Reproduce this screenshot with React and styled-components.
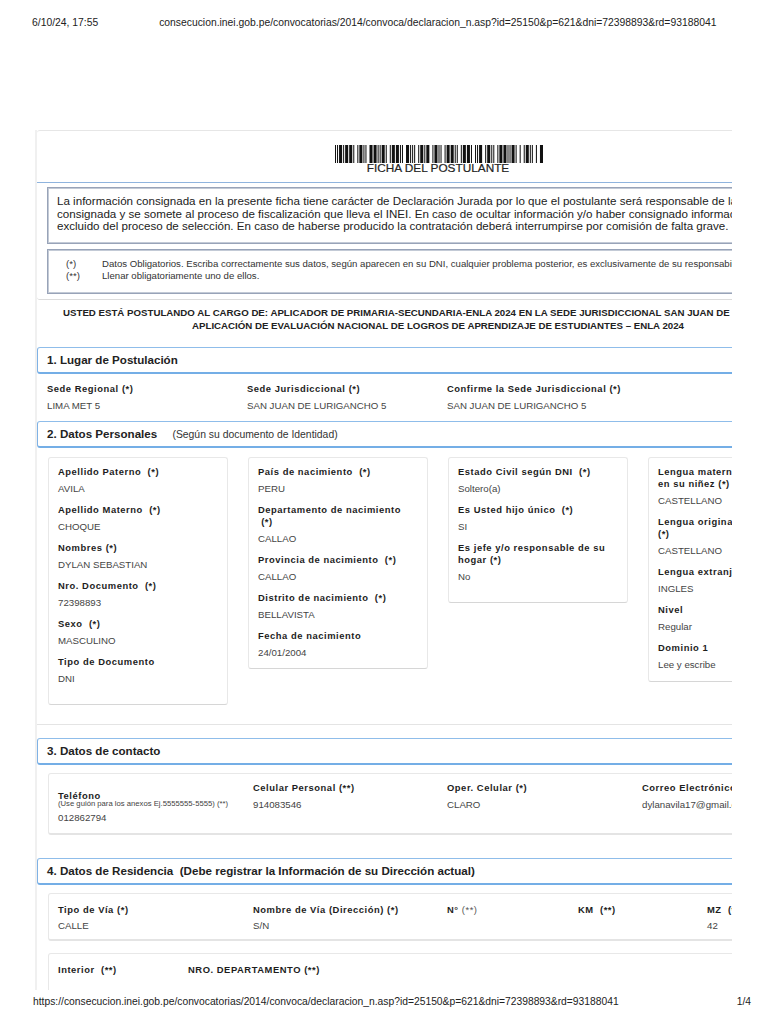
import React from "react";
import styled, { createGlobalStyle } from "styled-components";

const GlobalStyle = createGlobalStyle`
  html, body {
    margin: 0;
    padding: 0;
    background: #fff;
    font-family: "Liberation Sans", Arial, sans-serif;
    color: #222;
  }
`;

// narrow/wide runs, bar then gap, read off the printed code
const BARS = [
  1, 1, 1, 1, 3, 1, 1, 1, 3, 1, 3, 1, 1, 3, 1, 1, 3, 1, 1, 1, 1, 3, 3, 1, 3, 1, 1, 1, 1, 1,
  3, 1, 1, 3, 1, 1, 3, 1, 3, 1, 1, 1, 1, 3, 3, 1, 1, 1, 1, 1, 1, 3, 1, 1, 3, 1, 1, 1, 3, 3,
  1, 1, 3, 1, 1, 1, 1, 3, 1, 1, 3, 1, 3, 1, 1, 1, 1, 3, 1, 1, 3, 1, 3, 1, 1, 3, 1, 1, 1, 1,
  3, 3, 1, 1, 3, 1, 1, 1, 1, 3, 1, 1, 3, 1, 3, 1, 1, 1, 1, 1, 3, 1, 1, 3, 1, 3, 1, 1, 3, 1,
  1, 1, 1, 3, 1, 3, 3,
];

function Barcode() {
  let x = 0;
  const rects = [];
  BARS.forEach((w, i) => {
    if (i % 2 === 0) rects.push(<rect key={i} x={x} y="0" width={w} height="18" fill="#111" />);
    x += w;
  });
  return (
    <BarcodeSvg viewBox={`0 0 ${x} 18`} preserveAspectRatio="none">
      {rects}
    </BarcodeSvg>
  );
}

function Field({ label, value, note }) {
  return (
    <FieldBox>
      <Label>{label}</Label>
      {note && <Note>{note}</Note>}
      <Value>{value}</Value>
    </FieldBox>
  );
}

export default function App() {
  return (
    <Page>
      <GlobalStyle />
      <PrintHeader>
        <span>6/10/24, 17:55</span>
        <HeaderUrl>consecucion.inei.gob.pe/convocatorias/2014/convoca/declaracion_n.asp?id=25150&p=621&dni=72398893&rd=93188041</HeaderUrl>
      </PrintHeader>

      <Sheet>
        <TopPanel>
          <TitleBlock>
            <Barcode />
            <Title>FICHA DEL POSTULANTE</Title>
          </TitleBlock>
          <NoticeArea>
            <Notice>
              <NoticeLine>La información consignada en la presente ficha tiene carácter de Declaración Jurada por lo que el postulante será responsable de la información</NoticeLine>
              <NoticeLine>consignada y se somete al proceso de fiscalización que lleva el INEI. En caso de ocultar información y/o haber consignado información falsa será</NoticeLine>
              <NoticeLine>excluido del proceso de selección. En caso de haberse producido la contratación deberá interrumpirse por comisión de falta grave.</NoticeLine>
            </Notice>
            <Legend>
              <LegendRow>
                <LegendMark>(*)</LegendMark>
                <span>Datos Obligatorios. Escriba correctamente sus datos, según aparecen en su DNI, cualquier problema posterior, es exclusivamente de su responsabilidad.</span>
              </LegendRow>
              <LegendRow>
                <LegendMark>(**)</LegendMark>
                <span>Llenar obligatoriamente uno de ellos.</span>
              </LegendRow>
            </Legend>
          </NoticeArea>
        </TopPanel>

        <Applying>
          <ApplyLine $indent={26}>USTED ESTÁ POSTULANDO AL CARGO DE: APLICADOR DE PRIMARIA-SECUNDARIA-ENLA 2024 EN LA SEDE JURISDICCIONAL SAN JUAN DE LURIGANCHO 5</ApplyLine>
          <ApplyLine $indent={155}>APLICACIÓN DE EVALUACIÓN NACIONAL DE LOGROS DE APRENDIZAJE DE ESTUDIANTES – ENLA 2024</ApplyLine>
        </Applying>

        <Body>
          <SectionHead>1. Lugar de Postulación</SectionHead>
          <PlaceRow>
            <Field label="Sede Regional (*)" value="LIMA MET 5" />
            <Field label="Sede Jurisdiccional (*)" value="SAN JUAN DE LURIGANCHO 5" />
            <Field label="Confirme la Sede Jurisdiccional (*)" value="SAN JUAN DE LURIGANCHO 5" />
          </PlaceRow>

          <SectionHead>
            2. Datos Personales <SectionNote>(Según su documento de Identidad)</SectionNote>
          </SectionHead>
          <CardColumns>
            <Card $extra={10}>
              <Field label="Apellido Paterno  (*)" value="AVILA" />
              <Field label="Apellido Materno  (*)" value="CHOQUE" />
              <Field label="Nombres (*)" value="DYLAN SEBASTIAN" />
              <Field label="Nro. Documento  (*)" value="72398893" />
              <Field label="Sexo  (*)" value="MASCULINO" />
              <Field label="Tipo de Documento" value="DNI" />
            </Card>
            <Card>
              <Field label="País de nacimiento  (*)" value="PERU" />
              <Field label={"Departamento de nacimiento\n (*)"} value="CALLAO" />
              <Field label="Provincia de nacimiento  (*)" value="CALLAO" />
              <Field label="Distrito de nacimiento  (*)" value="BELLAVISTA" />
              <Field label="Fecha de nacimiento" value="24/01/2004" />
            </Card>
            <Card $extra={10}>
              <Field label="Estado Civil según DNI  (*)" value="Soltero(a)" />
              <Field label="Es Usted hijo único  (*)" value="SI" />
              <Field label={"Es jefe y/o responsable de su\nhogar (*)"} value="No" />
            </Card>
            <Card $extra={1}>
              <Field label={"Lengua materna aprendida\nen su niñez (*)"} value="CASTELLANO" />
              <Field label={"Lengua originaria que habla\n(*)"} value="CASTELLANO" />
              <Field label="Lengua extranjera" value="INGLES" />
              <Field label="Nivel" value="Regular" />
              <Field label="Dominio 1" value="Lee y escribe" />
            </Card>
          </CardColumns>
          <Divider />

          <SectionHead>3. Datos de contacto</SectionHead>
          <WideCard $columns="195px 194px 195px 1fr">
            <PhoneCell>
              <Field label="Teléfono" note="(Use guión para los anexos Ej.5555555-5555) (**)" value="012862794" />
            </PhoneCell>
            <Field label="Celular Personal (**)" value="914083546" />
            <Field label="Oper. Celular (*)" value="CLARO" />
            <Field label="Correo Electrónico (*)" value="dylanavila17@gmail.com" />
          </WideCard>

          <SectionHead $top={23}>4. Datos de Residencia  (Debe registrar la Información de su Dirección actual)</SectionHead>
          <ResidenceCard $columns="195px 194px 131px 129px 1fr">
            <Field label="Tipo de Vía (*)" value="CALLE" />
            <Field label="Nombre de Vía (Dirección) (*)" value="S/N" />
            <Field label={<>N° <Light>(**)</Light></>} value="" />
            <Field label="KM  (**)" value="" />
            <Field label="MZ  (**)" value="42" />
          </ResidenceCard>
          <ResidenceCard $columns="130px 1fr" $top={12}>
            <Field label="Interior  (**)" value="" />
            <Field label="NRO. DEPARTAMENTO (**)" value="" />
          </ResidenceCard>
        </Body>
      </Sheet>

      <PrintFooter>
        <span>https://consecucion.inei.gob.pe/convocatorias/2014/convoca/declaracion_n.asp?id=25150&p=621&dni=72398893&rd=93188041</span>
        <span>1/4</span>
      </PrintFooter>
    </Page>
  );
}

const Page = styled.div`
  width: 768px;
  height: 1024px;
  overflow: hidden;
  display: flex;
  flex-direction: column;
`;

const PrintHeader = styled.header`
  height: 130px;
  box-sizing: border-box;
  padding: 16px 0 0 32px;
  display: flex;
  font-size: 10.35px;
  line-height: 13px;
  color: #222;
`;

const HeaderUrl = styled.span`
  margin-left: 61px;
  white-space: nowrap;
`;

const Sheet = styled.main`
  width: 697px;
  height: 860px;
  margin-left: 35px;
  overflow: hidden;
  border-left: 2px solid #f0f0f0;
  box-sizing: border-box;
`;

const TopPanel = styled.section`
  width: 900px;
  height: 170px;
  box-sizing: border-box;
  border-top: 1px solid #e6e6e6;
  border-bottom: 1px solid #dcdcdc;
  border-radius: 3px 0 0 3px;
`;

const TitleBlock = styled.div`
  height: 52px;
  box-sizing: border-box;
  padding: 14px 0 0 298px;
  border-bottom: 1px solid #8fb4de;
  position: relative;
`;

const BarcodeSvg = styled.svg`
  display: block;
  width: 208px;
  height: 18px;
`;

const Title = styled.div`
  width: 206px;
  text-align: center;
  font-size: 11.8px;
  line-height: 12px;
  margin-top: -1px;
  color: #222;
  -webkit-text-stroke: 0.2px #222;
`;

const NoticeArea = styled.div`
  padding: 4px 0 0 10px;
  display: flex;
  flex-direction: column;
  gap: 5px;
`;

const Notice = styled.div`
  height: 57px;
  box-sizing: border-box;
  padding: 7px 0 0 9px;
  border: 1px solid #98a3b8;
  box-shadow: inset 0 0 0 1px #c3cad6;
  white-space: nowrap;
`;

const NoticeLine = styled.div`
  font-size: 11.6px;
  line-height: 12.5px;
  color: #222;
`;

const Legend = styled.div`
  height: 45px;
  box-sizing: border-box;
  padding: 8px 0 0 18px;
  border: 1px solid #98a3b8;
  box-shadow: inset 0 0 0 1px #c3cad6;
  white-space: nowrap;
`;

const LegendRow = styled.div`
  display: flex;
  font-size: 9.6px;
  line-height: 12px;
  color: #333;
`;

const LegendMark = styled.span`
  width: 36px;
`;

const Applying = styled.section`
  height: 47px;
  box-sizing: border-box;
  padding-top: 6px;
  white-space: nowrap;
`;

const ApplyLine = styled.div`
  padding-left: ${(p) => p.$indent}px;
  font-size: 9.7px;
  line-height: 13px;
  font-weight: bold;
  color: #222;
`;

const Body = styled.section`
  width: 900px;
`;

const SectionHead = styled.h2`
  margin: ${(p) => p.$top || 0}px 0 0;
  height: 27px;
  box-sizing: border-box;
  padding-left: 9px;
  border: 1px solid #8fbdea;
  border-left-color: #7fb2e5;
  border-bottom: 2px solid #74aee6;
  border-right: none;
  border-radius: 3px 0 0 3px;
  font-size: 11.6px;
  line-height: 24px;
  font-weight: bold;
  color: #222;
  white-space: pre;
`;

const SectionNote = styled.span`
  margin-left: 12px;
  font-size: 10.4px;
  font-weight: normal;
  color: #333;
`;

const PlaceRow = styled.div`
  display: grid;
  grid-template-columns: 200px 200px 1fr;
  height: 47px;
  box-sizing: border-box;
  padding: 8.5px 0 0 10px;
`;

const CardColumns = styled.div`
  display: flex;
  align-items: flex-start;
  gap: 20px;
  padding: 9px 0 0 11px;
  height: 276px;
  box-sizing: border-box;
`;

const Card = styled.div`
  width: 180px;
  flex: none;
  box-sizing: border-box;
  padding: 7.5px 0 ${(p) => p.$extra || 0}px 9px;
  border: 1px solid #e8e8e8;
  border-bottom-color: #d6d6d6;
  border-radius: 3px;
`;

const Divider = styled.hr`
  margin: 0 0 13px;
  border: none;
  border-top: 1px solid #e4e4e4;
`;

const WideCard = styled.div`
  display: grid;
  grid-template-columns: ${(p) => p.$columns};
  margin: ${(p) => p.$top ?? 8}px 0 0 11px;
  box-sizing: border-box;
  padding: 8px 0 0 9px;
  border: 1px solid #e8e8e8;
  border-bottom: 2px solid #e4e4e4;
  border-radius: 3px;
`;

const PhoneCell = styled.div`
  padding-top: 8px;
`;

const FieldBox = styled.div`
  margin-bottom: 9px;
`;

const Label = styled.div`
  font-size: 9.4px;
  line-height: 12px;
  font-weight: bold;
  letter-spacing: 0.55px;
  color: #1d1d1d;
  white-space: pre;
`;

const Light = styled.span`
  font-weight: normal;
  color: #555;
`;

const Note = styled.div`
  margin: -1px 0 1px;
  font-size: 7.7px;
  line-height: 6px;
  color: #444;
  white-space: nowrap;
`;

const Value = styled.div`
  margin-top: 4px;
  min-height: 13px;
  font-size: 9.7px;
  line-height: 13px;
  color: #444;
  white-space: nowrap;
`;

const ResidenceCard = styled(WideCard)`
  height: 48px;
  padding-top: 10px;

  ${Value} {
    margin-top: 2.5px;
  }
`;

const PrintFooter = styled.footer`
  display: flex;
  justify-content: space-between;
  width: 718px;
  margin: 5px 0 0 33px;
  font-size: 10.3px;
  line-height: 13px;
  color: #222;
`;
